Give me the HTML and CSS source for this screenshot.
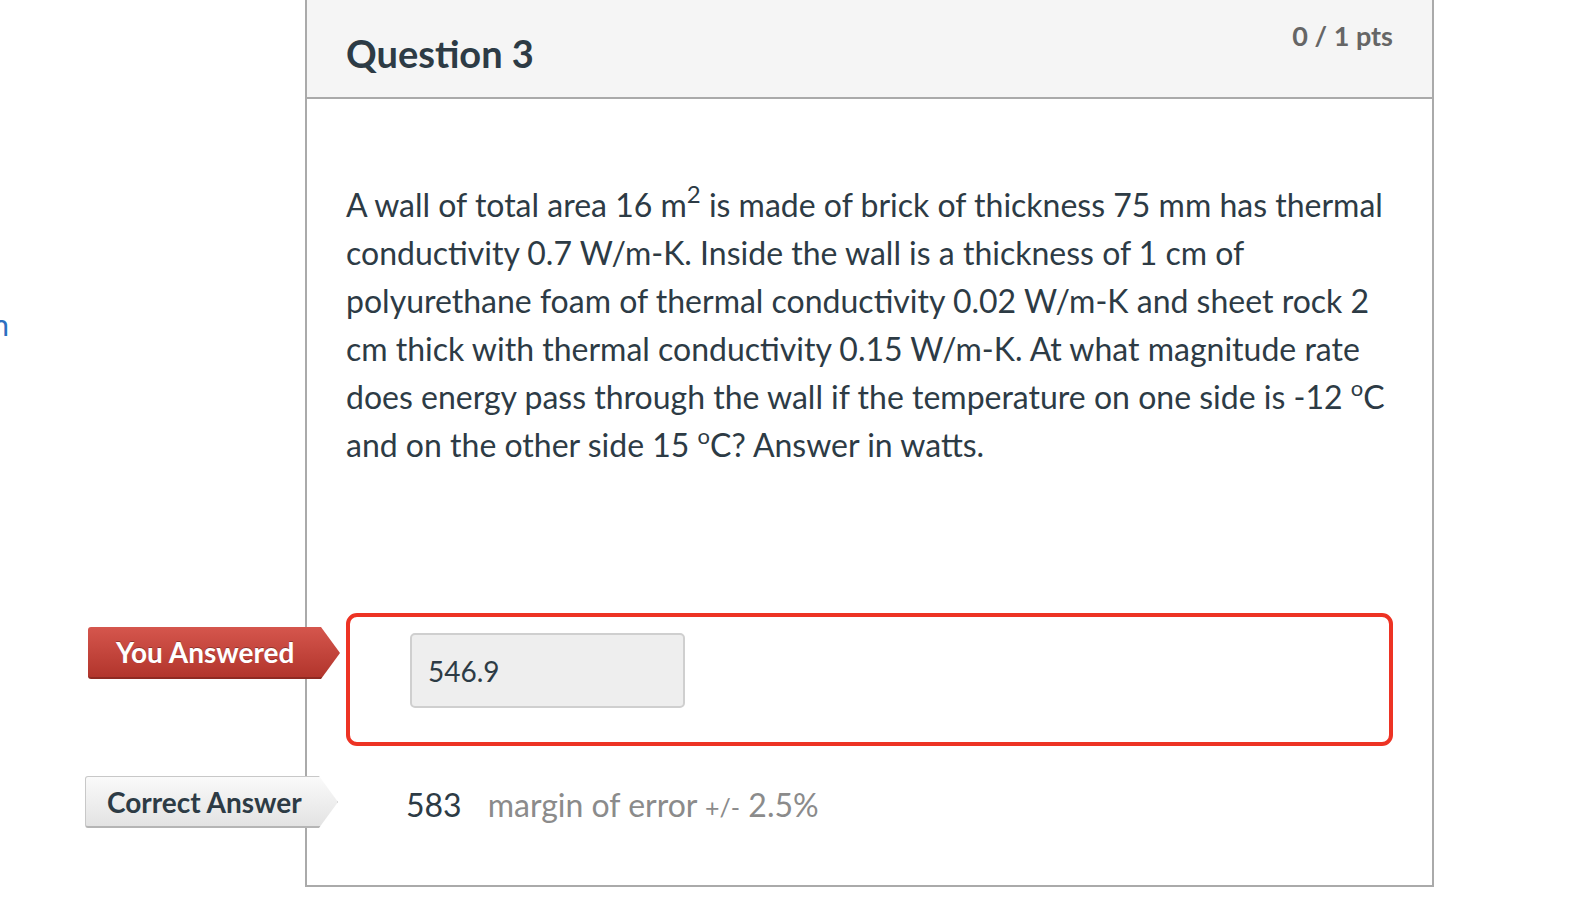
FILE: index.html
```html
<!DOCTYPE html>
<html>
<head>
<meta charset="utf-8">
<link rel="stylesheet" href="styles.css">
</head>
<body>
<div class="page">
  <aside class="side"><span class="side-link">Question</span></aside>
  <section class="question">
    <header class="q-header">
      <h2 class="q-title">Question 3</h2>
      <div class="q-pts">0 / 1 pts</div>
    </header>
    <div class="q-body">
      <p class="q-text">A wall of total area 16 m<sup>2</sup> is made of brick of thickness 75 mm has thermal conductivity 0.7 W/m-K. Inside the wall is a thickness of 1 cm of polyurethane foam of thermal conductivity 0.02 W/m-K and sheet rock 2 cm thick with thermal conductivity 0.15 W/m-K. At what magnitude rate does energy pass through the wall if the temperature on one side is -12 <sup class="deg">o</sup>C and on the other side 15 <sup class="deg">o</sup>C? Answer in watts.</p>
      <div class="answers">
        <div class="answer-row">
          <div class="flag flag-wrong">You Answered</div>
          <div class="answer-box">
            <div class="answer-input">546.9</div>
          </div>
        </div>
        <div class="answer-row correct-row">
          <div class="flag flag-correct">Correct Answer</div>
          <div class="correct-text"><span class="correct-val">583</span><span class="margin">margin of error <span class="pm">+/-</span> 2.5%</span></div>
        </div>
      </div>
    </div>
  </section>
</div>
</body>
</html>
```
FILE: styles.css
```css
* { box-sizing: border-box; }
html, body { margin: 0; padding: 0; background: #fff; }
body {
  font-family: Lato, "Liberation Sans", sans-serif;
  color: #2d3b45;
  overflow: hidden;
  height: 910px;
}
.page {
  display: flex;
  align-items: flex-start;
}
.side {
  width: 305px;
  flex: none;
  height: 885px;
  position: relative;
  overflow: hidden;
}
.side-link {
  position: absolute;
  right: 100%;
  margin-right: -9px;
  top: 306px;
  font-size: 30px;
  color: #2b6fc0;
  white-space: nowrap;
}
.question {
  width: 1129px;
  flex: none;
  border: 2px solid #aaaaaa;
  border-top: none;
  background: #fff;
  height: 887px;
}
.q-header {
  background: #f5f5f5;
  border-bottom: 2px solid #aaaaaa;
  height: 99px;
  display: flex;
  justify-content: space-between;
  align-items: flex-start;
  padding: 0 39px;
}
.q-title {
  margin: 28px 0 0;
  font-size: 38px;
  font-weight: 700;
  line-height: 50px;
  color: #2d3b45;
}
.q-pts {
  margin-top: 18px;
  font-size: 27px;
  font-weight: 700;
  color: #666666;
  line-height: 36px;
}
.q-body {
  padding: 82px 39px 0;
}
.q-text {
  margin: 0;
  font-size: 32px;
  line-height: 48px;
  color: #2d3b45;
}
.q-text sup {
  font-size: 24px;
  line-height: 0;
  vertical-align: 14px;
}
.q-text sup.deg {
  font-size: 22px;
  vertical-align: 13px;
}
.answers {
  margin-top: 144px;
  display: flex;
  flex-direction: column;
}
.answer-row {
  position: relative;
}
.flag {
  position: absolute;
  height: 52px;
  display: flex;
  align-items: center;
  font-size: 28px;
  font-weight: 700;
  clip-path: polygon(0 0, calc(100% - 19px) 0, 100% 50%, calc(100% - 19px) 100%, 0 100%);
  border-radius: 3px 0 0 3px;
}
.flag-wrong {
  left: -258px;
  top: 14px;
  width: 252px;
  padding-left: 28px;
  color: #fff;
  background: linear-gradient(#d5564d, #b2352c);
  border-bottom: 2px solid #8e2a22;
  text-shadow: 0 -1px 0 rgba(0,0,0,0.3);
}
.flag-correct {
  left: -261px;
  top: 0;
  width: 253px;
  padding-left: 21px;
  color: #2d3b45;
  background: linear-gradient(#fafafa, #e3e3e3);
  border: 1px solid #c8c8c8;
  border-bottom: 2px solid #b5b5b5;
}
.answer-box {
  height: 133px;
  border: 4px solid #ed3324;
  border-radius: 11px;
  padding: 16px 0 0 60px;
}
.answer-input {
  width: 275px;
  height: 75px;
  background: #eeeeee;
  border: 2px solid #cfcfcf;
  border-radius: 5px;
  font-size: 28px;
  padding-left: 16px;
  display: flex;
  align-items: center;
  color: #2d3b45;
}
.correct-row {
  margin-top: 30px;
  height: 52px;
}
.correct-text {
  padding-left: 60px;
  height: 56px;
  display: flex;
  align-items: center;
  font-size: 32px;
}
.correct-val {
  color: #2d3b45;
  margin-right: 26px;
}
.margin {
  color: #8b8b8b;
}
.pm {
  font-size: 25px;
}
```
